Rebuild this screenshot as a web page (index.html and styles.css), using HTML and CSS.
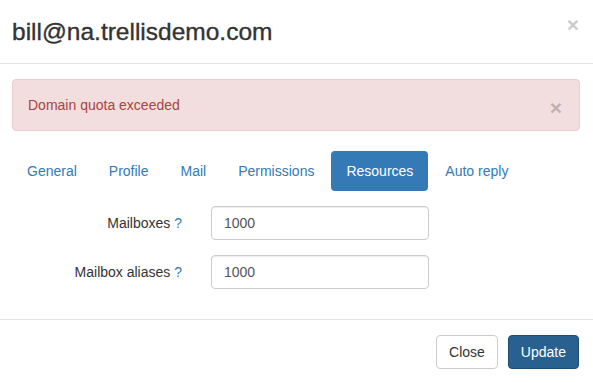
FILE: index.html
```html
<!DOCTYPE html>
<html>
<head>
<meta charset="utf-8">
<link rel="stylesheet" href="styles.css">
</head>
<body>
<div class="modal">
  <div class="modal-header">
    <h4 class="modal-title">bill@na.trellisdemo.com</h4>
    <button class="close header-close" type="button">&times;</button>
  </div>
  <div class="modal-body">
    <div class="alert">
      <span>Domain quota exceeded</span>
      <button class="close alert-close" type="button">&times;</button>
    </div>
    <ul class="nav">
      <li><a>General</a></li>
      <li><a>Profile</a></li>
      <li><a>Mail</a></li>
      <li><a>Permissions</a></li>
      <li class="active"><a>Resources</a></li>
      <li><a>Auto reply</a></li>
    </ul>
    <div class="tab-content">
      <div class="form-group">
        <label class="control-label">Mailboxes <span class="help">?</span></label>
        <input class="form-control" type="text" value="1000">
      </div>
      <div class="form-group">
        <label class="control-label">Mailbox aliases <span class="help">?</span></label>
        <input class="form-control" type="text" value="1000">
      </div>
    </div>
  </div>
  <div class="modal-footer">
    <button class="btn btn-default" type="button">Close</button>
    <button class="btn btn-primary" type="button">Update</button>
  </div>
</div>
</body>
</html>
```
FILE: styles.css
```css
* { box-sizing: border-box; }
html, body {
  margin: 0;
  padding: 0;
  background: #fff;
}
body {
  font-family: "Liberation Sans", Arial, sans-serif;
  font-size: 14px;
  line-height: 20px;
  color: #333;
}
.modal {
  width: 593px;
  height: 383px;
  overflow: hidden;
  background: #fff;
}
.modal-header {
  display: flex;
  justify-content: space-between;
  align-items: flex-start;
  padding: 15px 14px 15px 12px;
  border-bottom: 1px solid #e5e5e5;
}
.modal-title {
  margin: 0;
  font-size: 24.5px;
  line-height: 33px;
  font-weight: normal;
  color: #333;
  -webkit-text-stroke: 0.35px #333;
}
.close {
  padding: 0;
  border: 0;
  background: transparent;
  font-family: "Liberation Sans", Arial, sans-serif;
  font-size: 21px;
  font-weight: bold;
  line-height: 20px;
  height: 20px;
  color: #000;
  opacity: 0.2;
  cursor: pointer;
}
.header-close {
  margin-top: 0;
}
.modal-body {
  padding: 15px 13px 15px 12px;
}
.alert {
  display: flex;
  justify-content: space-between;
  align-items: flex-start;
  padding: 15px;
  margin-bottom: 20px;
  border: 1px solid #ebccd1;
  border-radius: 4px;
  background: #f2dede;
  color: #a94442;
}
.alert-close {
  margin-right: 2px;
  margin-top: 3px;
  margin-bottom: -3px;
}
.nav {
  display: flex;
  gap: 2px;
  list-style: none;
  margin: 0;
  padding: 0;
}
.nav a {
  display: block;
  padding: 10px 15px;
  border-radius: 4px;
  color: #337ab7;
}
.nav .active a {
  background: #337ab7;
  color: #fff;
}
.tab-content {
  padding-top: 15px;
}
.form-group {
  display: grid;
  grid-template-columns: 170px 218px;
  column-gap: 29px;
  margin-bottom: 15px;
}
.control-label {
  text-align: right;
  padding-top: 7px;
  font-weight: normal;
  color: #333;
}
.help {
  color: #337ab7;
}
.form-control {
  display: block;
  width: 218px;
  height: 34px;
  padding: 6px 12px;
  font-family: "Liberation Sans", Arial, sans-serif;
  font-size: 14px;
  line-height: 20px;
  color: #555;
  background: #fff;
  border: 1px solid #ccc;
  border-radius: 4px;
  box-shadow: inset 0 1px 1px rgba(0,0,0,0.075);
}
.modal-footer {
  display: flex;
  justify-content: flex-end;
  gap: 10px;
  padding: 15px 14px 15px 15px;
  border-top: 1px solid #e5e5e5;
}
.btn {
  height: 34px;
  padding: 6px 12px;
  font-family: "Liberation Sans", Arial, sans-serif;
  font-size: 14px;
  line-height: 20px;
  border: 1px solid transparent;
  border-radius: 4px;
  cursor: pointer;
}
.btn-default {
  color: #333;
  background: #fff;
  border-color: #ccc;
}
.btn-primary {
  color: #fff;
  background: #286090;
  border-color: #204d74;
}
```
